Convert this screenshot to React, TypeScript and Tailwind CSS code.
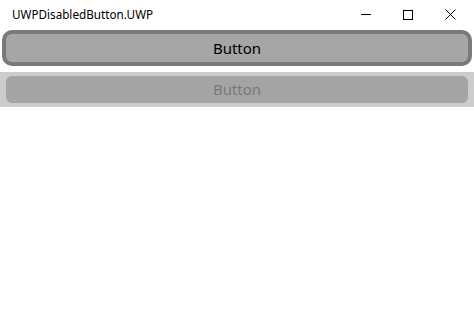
export default function App() {
  return (
    <div className="w-[474px] h-[333px] bg-white overflow-hidden" style={{ fontFamily: '"Noto Sans", "Open Sans", sans-serif' }}>
      <div className="h-[29px] flex items-center justify-between">
        <span className="pl-[12px] text-[11.7px] text-black">UWPDisabledButton.UWP</span>
        <div className="flex h-full pr-[3px]">
          <div className="w-[42px] h-full flex items-center justify-center">
            <div className="w-[10px] h-px bg-black" />
          </div>
          <div className="w-[42px] h-full flex items-center justify-center">
            <div className="w-[10px] h-[10px] border border-black" />
          </div>
          <div className="w-[42px] h-full flex items-center justify-center">
            <svg width="11" height="11" viewBox="0 0 11 11">
              <path d="M0.5 0.5 L10.5 10.5 M10.5 0.5 L0.5 10.5" stroke="black" strokeWidth="1" />
            </svg>
          </div>
        </div>
      </div>
      <div className="px-[2px] pt-[1px] bg-white">
        <button className="w-full h-[36px] rounded-[10px] border-[4px] border-[#7a7a7a] bg-[#a6a6a6] text-[15px] text-black flex items-center justify-center">
          Button
        </button>
      </div>
      <div className="h-[6px]" />
      <div className="bg-[#cccccc] h-[35px] px-[6px] flex items-center">
        <button disabled className="w-full h-[27px] rounded-[6px] bg-[#a4a4a4] text-[15px] text-[#7a7a7a] flex items-center justify-center">
          Button
        </button>
      </div>
    </div>
  )
}
